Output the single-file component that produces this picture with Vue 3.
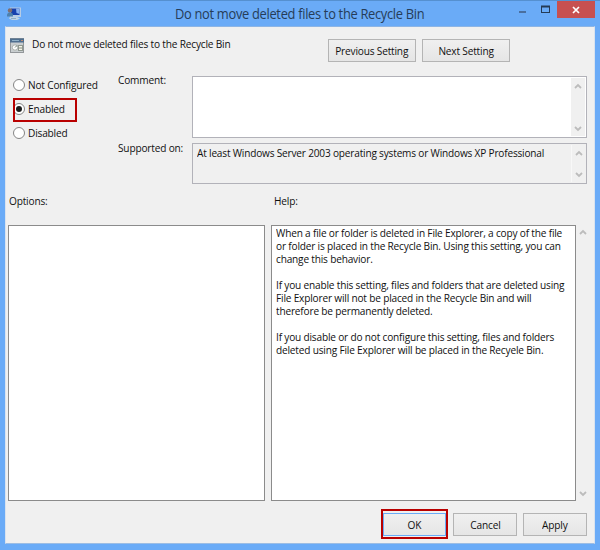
<script setup>
import { ref } from 'vue'

const state = ref('Enabled')
const choices = [
  { label: 'Not Configured', cls: 'not-configured' },
  { label: 'Enabled', cls: 'enabled' },
  { label: 'Disabled', cls: 'disabled' },
]
const help = [
  ['When a file or folder is deleted in File Explorer, a copy of the file', 'or folder is placed in the Recycle Bin. Using this setting, you can', 'change this behavior.'],
  ['If you enable this setting, files and folders that are deleted using', 'File Explorer will not be placed in the Recycle Bin and will', 'therefore be permanently deleted.'],
  ['If you disable or do not configure this setting, files and folders', 'deleted using File Explorer will be placed in the Recyele Bin.'],
]
</script>

<template>
  <div class="window">
    <header class="titlebar">
      <svg class="app-icon" width="15" height="14" viewBox="0 0 15 14">
        <rect x="3" y="0.500" width="11" height="9.500" fill="#b7cce5" />
        <rect x="4" y="1.500" width="8.500" height="6.500" fill="#1740ad" />
        <path d="M9 1.500h3.500v5.500l-3-1z" fill="#86b0f0" />
        <circle cx="3" cy="3.500" r="2.200" fill="#806e70" />
        <path d="M0 8.500q0-3 3-3t3 3v1H0z" fill="#4d80ad" />
        <path d="M3 10h7l3 1.500-3 1.500H5L2 11.500z" fill="#bed2e3" />
        <path d="M4 11.500h5" stroke="#8cabc9" />
      </svg>
      <h1 class="title">Do not move deleted files to the Recycle Bin</h1>
      <div class="controls">
        <svg width="72" height="17" viewBox="0 0 72 17">
          <path d="M34 11h7" stroke="#4a6f9f" stroke-width="2" />
          <rect x="56.500" y="5.500" width="8" height="6" fill="none" stroke="#253b55" />
          <path d="M56 5.500h9" stroke="#253b55" stroke-width="2" />
        </svg>
        <button class="close" aria-label="Close">
          <svg width="8" height="8" viewBox="0 0 8 8"><path d="M1 1l6 6M7 1L1 7" stroke="#fff" stroke-width="1.700" /></svg>
        </button>
      </div>
    </header>

    <main class="body">
      <section class="heading">
        <svg class="policy-icon" width="15" height="15" viewBox="0 0 15 15">
          <rect x="0.500" y="0.500" width="13" height="14" fill="#c9ced0" stroke="#93979a" />
          <rect x="0" y="0.500" width="14" height="4" fill="#4f6f8f" />
          <path d="M2 2.500h7" stroke="#8fb0c7" />
          <path d="M11 2.500h2" stroke="#c08a74" />
          <circle cx="5" cy="9.500" r="2.700" fill="#fff" stroke="#a9b0aa" />
          <path d="M5 9.500l2-2" stroke="#6a8070" />
          <rect x="8.500" y="7.500" width="4" height="5" fill="#f4f4e8" stroke="#909890" />
          <path d="M9 10h3" stroke="#868e83" />
        </svg>
        <span class="policy-name"><span class="t">Do not move deleted files to the Recycle Bin</span></span>
        <button class="btn wide previous"><span class="tc">Previous Setting</span></button>
        <button class="btn wide next"><span class="tc">Next Setting</span></button>
      </section>

      <section class="settings">
        <div class="radios">
          <label v-for="c in choices" :key="c.label" class="radio" :class="[c.cls, { marked: c.label === state }]" @click="state = c.label">
            <span class="dot" :class="{ on: c.label === state }"></span>
            <span class="t radio-text">{{ c.label }}</span>
          </label>
        </div>
        <div class="fields">
          <span class="label comment-label"><span class="t">Comment:</span></span>
          <div class="field comment">
            <div class="field-text"></div>
            <div class="scroll">
              <svg width="8" height="6" viewBox="0 0 8 6"><path d="M1 5l3-3 3 3" /></svg>
              <svg width="8" height="6" viewBox="0 0 8 6"><path d="M1 1l3 3 3-3" /></svg>
            </div>
          </div>
          <span class="label supported-label"><span class="t">Supported on:</span></span>
          <div class="field supported">
            <div class="field-text"><span class="t supported-text">At least Windows Server 2003 operating systems or Windows XP Professional</span></div>
            <div class="scroll">
              <svg width="8" height="6" viewBox="0 0 8 6"><path d="M1 5l3-3 3 3" /></svg>
              <svg width="8" height="6" viewBox="0 0 8 6"><path d="M1 1l3 3 3-3" /></svg>
            </div>
          </div>
        </div>
      </section>

      <section class="panes">
        <span class="options-label"><span class="t">Options:</span></span>
        <span class="help-label"><span class="t">Help:</span></span>
        <div class="pane options"></div>
        <div class="pane help">
          <p v-for="(para, i) in help" :key="i">
            <span v-for="line in para" :key="line" class="t line">{{ line }}</span>
          </p>
        </div>
        <div class="scroll pane-scroll">
          <svg width="8" height="6" viewBox="0 0 8 6"><path d="M1 5l3-3 3 3" /></svg>
          <svg width="8" height="6" viewBox="0 0 8 6"><path d="M1 1l3 3 3-3" /></svg>
        </div>
      </section>

      <footer class="actions">
        <div class="highlight"><button class="btn ok"><span class="tc">OK</span></button></div>
        <button class="btn cancel"><span class="tc">Cancel</span></button>
        <button class="btn apply"><span class="tc">Apply</span></button>
      </footer>
    </main>
  </div>
</template>

<style>
body { margin: 0; }
</style>

<style scoped>
* { box-sizing: border-box; }
.window {
  width: 600px; height: 550px; padding: 0 5px 6px;
  display: flex; flex-direction: column;
  background: #6aabf7; border-top: 1px solid #5590d0;
  font: 11px/13px "Open Sans", "Noto Sans", sans-serif;
  letter-spacing: -0.2px; color: #101010; white-space: nowrap;
}
/* slightly condensed interface text */
.t { display: inline-block; transform: scaleX(0.92); transform-origin: 0 0; }
.tc { display: inline-block; transform: scaleX(0.92); }
.titlebar { height: 25px; display: flex; flex: none; }
.app-icon { margin: 6px 0 0 2px; flex: none; }
.title { margin: 4px 0 0 153px; width: 282px; flex: none; font-size: 14px; line-height: 18px; font-weight: 400; letter-spacing: -0.35px; color: #263d58; transform: scaleX(0.922); transform-origin: 0 0; }
.controls { display: flex; margin-left: auto; }
.close { width: 38px; height: 17px; padding: 0; border: 0; background: #c75050; display: flex; align-items: center; justify-content: center; }
.body { flex: 1; background: #f0f0f0; border: 1px solid #d9e3ef; border-top-color: #8db5e5; border-bottom-color: #9cbde4; display: flex; flex-direction: column; }
.heading { height: 49px; padding: 12px 0 0 4px; display: flex; align-items: flex-start; flex: none; }
.policy-icon { flex: none; margin-top: -1px; }
.policy-name { width: 303px; padding-left: 6.5px; margin-top: -2px; }
.btn {
  width: 64px; height: 24px; padding: 0; flex: none;
  display: flex; align-items: center; justify-content: center;
  border: 1px solid #b4b4b4; background: linear-gradient(#f0f0f0, #e5e5e5);
  font: inherit; letter-spacing: inherit; color: #101010;
}
.wide { width: 88px; height: 23px; }
.next { margin-left: 6px; }
.settings { display: flex; height: 108px; flex: none; }
.radios { width: 112px; padding: 0 0 0 7px; margin-top: -2px; display: flex; flex-direction: column; }
.radio { height: 24px; display: flex; align-items: center; align-self: flex-start; padding: 0 6px 2px 0; }
.radio-text { position: relative; top: -0.5px; }
.radio.marked { width: 64px; outline: 2px solid #b90000; outline-offset: -2px; }
.dot { width: 12px; height: 12px; border: 1px solid #858585; border-radius: 50%; background: #fff; margin-right: 3px; flex: none; display: grid; place-items: center; }
.dot.on::after { content: ""; width: 6px; height: 6px; border-radius: 50%; background: #1d1d1d; }
.fields { display: grid; grid-template-columns: 74px 395px; grid-template-rows: 62px 41px; row-gap: 5px; }
.comment-label { margin-top: -3px; }
.supported-label { margin-top: -2px; }
.field { border: 1px solid #b2b2b9; display: flex; justify-content: space-between; padding: 1px; min-width: 0; }
.comment { background: #fff; }
.field-text { padding: 1px 0 0 3px; width: 377px; }
.supported-text { transform: scaleX(0.916); }
.scroll { width: 14px; flex: none; background: #f0f0f0; display: flex; flex-direction: column; align-items: center; justify-content: space-between; padding: 5px 0 4px; }
.supported .scroll { border-left: 1px solid #f8f8f8; }
.scroll path { fill: none; stroke: #bcbcbc; stroke-width: 1.8; }
.panes { display: grid; grid-template-columns: 258px 6px 305px 14px; grid-template-rows: 41px 276px; padding-left: 1px; flex: none; }
.options-label { grid-column: 1; padding: 10px 0 0 2px; }
.help-label { grid-column: 3; padding: 10px 0 0 3px; }
.pane { grid-row: 2; background: #fff; border: 1px solid #8b8b8b; }
.options { grid-column: 1; margin-left: 1px; }
.help { grid-column: 3; padding: 0 0 0 4px; }
.help p { margin: 0 0 13px; }
.line { display: block; width: max-content; transform: scaleX(0.918); }
.pane-scroll { grid-row: 2; grid-column: 4; padding: 4px 0; }
.actions { display: flex; justify-content: flex-end; align-items: flex-start; padding: 8px 7px 0 0; }
.highlight { width: 67px; height: 30px; border: 2px solid #b90000; display: flex; justify-content: center; align-items: center; }
.ok { width: 63px; height: 23px; border-color: #6aabf7; }
.cancel { margin: 4px 0 0 5px; height: 23px; }
.apply { margin: 4px 0 0 6px; height: 23px; }
</style>
